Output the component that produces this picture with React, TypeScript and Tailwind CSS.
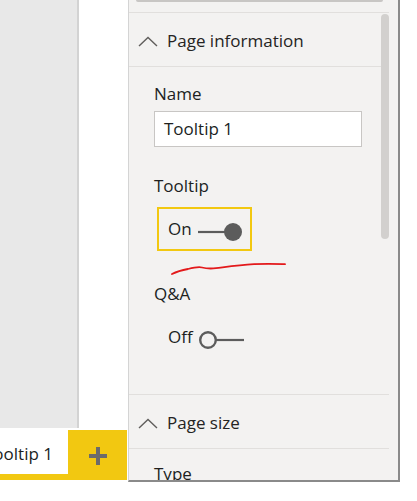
import React from 'react';

const font = { fontFamily: '"Open Sans", "Noto Sans", sans-serif' };

function Chevron() {
  return (
    <svg width="20" height="11" viewBox="0 0 20 11" className="shrink-0">
      <polyline points="1,10 10,1.5 19,10" fill="none" stroke="#605e5c" strokeWidth="1.4" />
    </svg>
  );
}

function SectionHeader({ title }: { title: string }) {
  return (
    <div className="flex h-[53px] shrink-0 items-center gap-[9px] pl-[9px] pt-[3px]">
      <Chevron />
      <span className="text-[17px] leading-6 text-[#252423]">{title}</span>
    </div>
  );
}

function Divider() {
  return <div className="h-px shrink-0 bg-[#e1dfdd]" />;
}

function ToggleOn() {
  return (
    <svg width="44" height="24" viewBox="0 0 44 24" className="shrink-0">
      <line x1="0" y1="15" x2="30" y2="15" stroke="#5c5c5c" strokeWidth="2.2" />
      <circle cx="35" cy="15" r="9" fill="#5c5c5c" />
    </svg>
  );
}

function ToggleOff() {
  return (
    <svg width="46" height="24" viewBox="0 0 46 24" className="shrink-0">
      <circle cx="9" cy="15" r="7.8" fill="none" stroke="#5c5c5c" strokeWidth="2.4" />
      <line x1="17" y1="15" x2="45" y2="15" stroke="#5c5c5c" strokeWidth="2.2" />
    </svg>
  );
}

export default function App() {
  return (
    <div className="relative h-[501px] w-[417px] overflow-hidden bg-white text-[#201f1e]" style={font}>
      <div className="flex h-[482px]">
        {/* report canvas + page tabs */}
        <div className="flex w-[128px] flex-col">
          <div className="flex h-[428px] shrink-0">
            <div className="w-[77px] bg-[#e8e8e8]" />
            <div className="w-[2px] bg-[#d3d3d3]" />
            <div className="flex-1 bg-white" />
          </div>
          <div className="flex h-[52px] shrink-0 items-end">
            <div className="flex h-[52px] w-[68px] items-center justify-end overflow-hidden border-b-[6px] border-[#f2c811] bg-white pr-[15px] pt-[5px]">
              <span className="whitespace-nowrap text-[17px] leading-6">Tooltip 1</span>
            </div>
            <div className="flex h-[50px] w-[59px] items-center justify-center bg-[#f2c811] pt-[2px]">
              <svg width="18" height="18" viewBox="0 0 18 18">
                <rect x="7" y="0" width="4" height="18" fill="#6b6b6b" />
                <rect x="0" y="7" width="18" height="4" fill="#6b6b6b" />
              </svg>
            </div>
          </div>
        </div>

        {/* format pane */}
        <div className="relative flex w-[272px] items-start overflow-hidden border-b-2 border-l border-r-2 border-b-[#8a8a8a] border-l-[#d4d4d4] border-r-[#8a8a8a] bg-[#f3f2f1]">
          <div className="flex w-[260px] flex-col">
            <div className="ml-[7px] h-[2px] w-[247px] shrink-0 rounded-b-[2px] bg-[#c8c6c4]" />
            <div className="mt-[10px]">
              <Divider />
            </div>
            <SectionHeader title="Page information" />
            <Divider />
            <div className="flex flex-col items-start pl-[25px]">
              <span className="mt-[15px] text-[17px] leading-6">Name</span>
              <div className="mt-[5px] flex h-[36px] w-[208px] items-center border border-[#c8c6c4] bg-white pl-[9px]">
                <span className="text-[17px] leading-6">Tooltip 1</span>
              </div>
              <span className="mt-[27px] text-[17px] leading-6">Tooltip</span>
              <div className="ml-[3px] mt-[9px] flex h-[44px] w-[95px] items-center gap-[6px] border-2 border-[#f2c811] pl-[9px]">
                <span className="text-[17px] leading-6">On</span>
                <ToggleOn />
              </div>
              <span className="mt-[31px] text-[17px] leading-6">Q&amp;A</span>
              <div className="ml-[14px] mt-[19px] flex h-[24px] items-center gap-[6px]">
                <span className="text-[17px] leading-6">Off</span>
                <ToggleOff />
              </div>
            </div>
            <div className="mt-[45px]">
              <Divider />
            </div>
            <SectionHeader title="Page size" />
            <Divider />
            <span className="ml-[25px] mt-[13px] text-[17px] leading-6">Type</span>
          </div>
          <div className="absolute left-[252px] top-[14px] h-[225px] w-[8px] rounded-full bg-[#d2d0ce]" />
        </div>
      </div>

      {/* hand-drawn red annotation */}
      <svg className="absolute left-[168px] top-[260px]" width="122" height="18" viewBox="0 0 122 18">
        <path
          d="M4,14 C8,12 12,10.5 20,9 C26,7.5 30,6.5 34,7.5 C38,8.5 42,8.8 48,8.2 C58,7 70,5.2 86,4.2 C100,3.6 110,4 117,4.2"
          fill="none"
          stroke="#e3191b"
          strokeWidth="1.8"
          strokeLinecap="round"
        />
      </svg>
    </div>
  );
}
